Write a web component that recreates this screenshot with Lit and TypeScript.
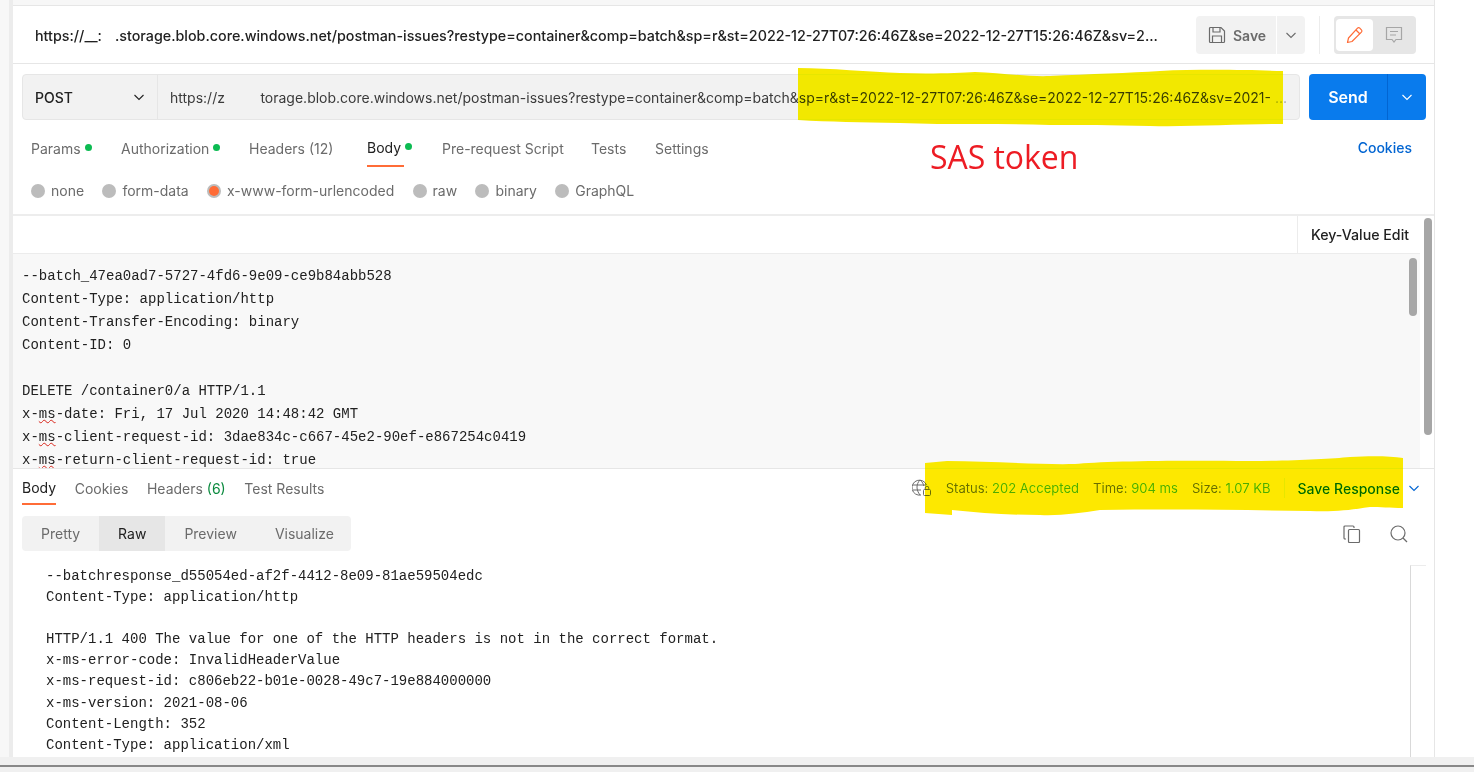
import { LitElement, html, css, svg } from "lit";
import { customElement } from "lit/decorators.js";

const chevron = (cls: string) => html`<svg class=${cls} viewBox="0 0 12 12" width="12" height="12" fill="none" stroke="currentColor" stroke-width="1.1"><path d="M1.5 4 6 8.5 10.5 4"/></svg>`;

const wavy = (rest: string) => html`x-<span class="sp">ms</span>${rest}`;

@customElement("app-root")
export class AppRoot extends LitElement {
  static styles = css`
    :host { display: flex; flex-direction: column; width: 1474px; height: 772px; position: relative; overflow: hidden; background: #fff; font-family: Inter, "Noto Sans", sans-serif; color: #6b6b6b; font-size: 14px; }
    * { box-sizing: border-box; }
    .desk { display: flex; height: 757px; flex: none; }
    .gutter { width: 13px; flex: none; background: #f7f7f7; border-right: 4px solid #ececec; }
    .main { width: 1422px; flex: none; display: flex; flex-direction: column; border-right: 1px solid #e6e6e6; }
    .topstrip { height: 6px; flex: none; background: #f7f7f7; border-bottom: 1px solid #e6e6e6; }
    .head { height: 58px; flex: none; display: flex; align-items: center; padding: 0 0 0 22px; border-bottom: 1px solid #e6e6e6; }
    .title { width: 1161px; flex: none; font-size: 14.3px; font-weight: 500; color: #212121; white-space: nowrap; overflow: hidden; padding-top: 1px; }
    .blot { display: inline-block; }
    .b1 { width: 13px; }
    .b2 { width: 38px; }
    .save { display: flex; align-items: center; gap: 7px; width: 80px; height: 38px; margin-top: 1px; background: #f2f2f2; border-radius: 4px 0 0 4px; padding-left: 12px; font-weight: 600; font-size: 14px; color: #6b6b6b; }
    .savechev { display: flex; align-items: center; justify-content: center; width: 28px; height: 38px; margin: 1px 0 0 1px; background: #f2f2f2; border-radius: 0 4px 4px 0; color: #6b6b6b; }
    .vr { width: 1px; height: 38px; margin: 1px 14px 0 14px; background: #ececec; }
    .toggle { display: flex; align-items: center; width: 82px; height: 38px; margin-top: 1px; background: #e6e6e6; border-radius: 4px; padding: 3px 2px; }
    .toggle .on { width: 37px; height: 32px; background: #fff; border-radius: 4px; display: flex; align-items: center; justify-content: center; }
    .toggle .off { flex: 1; display: flex; align-items: center; justify-content: center; }
    .urlrow { height: 66px; flex: none; display: flex; align-items: flex-start; padding: 10px 8px 0 9px; gap: 9px; }
    .urlbar { width: 1278px; height: 46px; flex: none; display: flex; background: #f2f2f2; border: 1px solid #e6e6e6; border-radius: 4px; }
    .method { width: 135px; flex: none; display: flex; align-items: center; justify-content: space-between; padding: 0 12px; border-right: 1px solid #e6e6e6; font-weight: 500; font-size: 14px; color: #212121; }
    .url { flex: 1; display: flex; align-items: center; padding: 0 12px; font-size: 14px; color: #3b3b3b; white-space: pre; overflow: hidden; }
    .fade { color: #a6a6a6; }
    .send { width: 117px; height: 46px; flex: none; display: flex; background: #097bed; border-radius: 4px; color: #fff; font-weight: 600; font-size: 16px; }
    .send .lbl { width: 79px; display: flex; align-items: center; justify-content: center; border-right: 1px solid #0265d2; }
    .send .dd { flex: 1; display: flex; align-items: center; justify-content: center; }
    .tabs { height: 38px; flex: none; display: flex; padding-left: 18px; }
    .tab { height: 38px; display: flex; align-items: center; gap: 4px; white-space: nowrap; padding-bottom: 2px; }
    .tab.active { color: #212121; height: 37px; padding-bottom: 1px; border-bottom: 2px solid #ff6c37; }
    .dot { flex: none; width: 7px; height: 7px; border-radius: 50%; background: #0cbb52; margin-bottom: 1px; }
    .w90 { width: 90px; }
    .w128 { width: 128px; }
    .w118 { width: 118px; }
    .w37 { width: 37px; }
    .w149 { width: 149px; margin-left: 38px; }
    .w64 { width: 64px; }
    .cookies { margin-left: auto; margin-right: 22px; color: #0265d2; font-weight: 500; font-size: 14px; padding-bottom: 3px; height: 38px; display: flex; align-items: center; }
    .radios { height: 48px; flex: none; display: flex; align-items: center; padding: 0 0 1px 18px; gap: 18.3px; border-bottom: 2px solid #ededed; }
    .radio { display: flex; align-items: center; gap: 6px; white-space: nowrap; }
    .radio i { width: 14px; height: 14px; border-radius: 50%; background: #bcbcbc; display: flex; align-items: center; justify-content: center; }
    .radio i.sel::after { content: ""; width: 10px; height: 10px; border-radius: 50%; background: #ff6c37; }
    .bodyarea { flex: none; height: 252px; display: flex; flex-direction: column; position: relative; }
    .kv { height: 38px; flex: none; display: flex; justify-content: flex-end; border-bottom: 1px solid #ececec; margin-right: 14px; }
    .kv span { width: 123px; border-left: 1px solid #ececec; display: flex; align-items: center; padding-left: 13px; color: #212121; font-weight: 500; font-size: 14.2px; }
    .editor { flex: 1; margin-right: 14px; background: #f8f8f8; padding: 11px 0 0 9px; overflow: hidden; position: relative; }
    .code { font-family: "Liberation Mono", "DejaVu Sans Mono", monospace; font-size: 14px; color: #212121; white-space: pre; }
    .editor .code { line-height: 23px; }
    .sp { text-decoration: underline wavy #d8261c 1px; }
    .sb { position: absolute; width: 8px; border-radius: 4px; background: #a6a6a6; }
    .sb.outer { right: 2px; top: 2px; height: 217px; }
    .sb.inner { right: 3px; top: 4px; height: 58px; }
    .resp { flex: 1; display: flex; flex-direction: column; border-top: 1px solid #e6e6e6; min-height: 0; }
    .rtabs { height: 36px; flex: none; display: flex; align-items: stretch; padding-left: 9px; gap: 18.6px; }
    .rtab { display: flex; align-items: center; height: 36px; padding-top: 2px; white-space: nowrap; }
    .rtab.active { color: #212121; border-bottom: 2px solid #ff6c37; }
    .rtab b { font-weight: 400; color: #0a8a3e; }
    .meta { margin-left: auto; display: flex; align-items: center; font-size: 13.05px; color: #6b6b6b; padding-top: 2px; }
    .globe { margin-right: 14px; }
    .v { color: #50aa40; }
    .m { margin-right: 14px; white-space: nowrap; }
    .sep { width: 1px; height: 20px; background: #e6e6e6; margin: 0 13px 0 -1px; }
    .sr { color: #0265d2; font-weight: 500; font-size: 14px; white-space: nowrap; }
    .ch { color: #0265d2; margin: 0 14px 0 8px; display: flex; }
    .rtools { height: 60px; flex: none; display: flex; align-items: flex-start; padding: 11px 0 0 9px; }
    .seg { display: flex; height: 35px; background: #f2f2f2; border-radius: 4px; overflow: hidden; }
    .seg span { display: flex; align-items: center; padding: 0 19px; }
    .seg span:last-child { padding-right: 17px; }
    .seg span.on { background: #e6e6e6; color: #212121; }
    .icons { margin-left: auto; display: flex; gap: 29px; padding: 9px 26px 0 0; }
    .rbody { flex: 1; min-height: 0; display: flex; padding: 0 0 0 33px; overflow: hidden; }
    .rbody .code { flex: 1; line-height: 21.15px; padding-top: 0.6px; }
    .rgut { width: 16px; margin-right: 8px; flex: none; border-left: 1px solid #d9d9d9; border-top: 1px solid #ececec; }
    .foot { flex: 1; display: flex; flex-direction: column; background: #f0f0f0; }
    .foot i { display: block; height: 2px; margin-top: 8px; background: #888; }
    .ink { position: absolute; left: 0; top: 0; width: 1474px; height: 772px; pointer-events: none; mix-blend-mode: darken; }
    .note { position: absolute; left: 930px; top: 135px; font-family: "Open Sans", "Noto Sans", sans-serif; font-size: 32px; line-height: 44px; color: #ed1c24; letter-spacing: -0.05px; white-space: nowrap; }
  `;

  render() {
    return html`
      <div class="desk">
        <div class="gutter"></div>
        <div class="main">
          <div class="topstrip"></div>
          <div class="head">
            <div class="title">https://__:<span class="blot b1"></span>.storage.blob.core.windows.net/postman-issues?restype=container&amp;comp=batch&amp;sp=r&amp;st=2022-12-27T07:26:46Z&amp;se=2022-12-27T15:26:46Z&amp;sv=2...</div>
            <div class="save">
              <svg width="18" height="18" viewBox="0 0 18 18" fill="none" stroke="#6b6b6b" stroke-width="1.2"><path d="M1.5 2.5a1 1 0 0 1 1-1h10.5l3.5 3.5v10.5a1 1 0 0 1-1 1h-13a1 1 0 0 1-1-1z"/><path d="M5 1.5v4.5h7V1.5"/><path d="M4.5 16.5v-6.5h9v6.5"/></svg>
              Save
            </div>
            <div class="savechev">${chevron("")}</div>
            <div class="vr"></div>
            <div class="toggle">
              <div class="on"><svg width="18" height="18" viewBox="0 0 18 18" fill="none" stroke="#ff6c37" stroke-width="1.2" stroke-linejoin="round"><path d="M1.5 16.5l1-4.5L11.5 2.2a1.6 1.6 0 0 1 2.3 0l1.6 1.6a1.6 1.6 0 0 1 0 2.3L6 15.5z"/><path d="M10 4l4 4"/></svg></div>
              <div class="off"><svg width="18" height="18" viewBox="0 0 18 18" fill="none" stroke="#a6a6a6" stroke-width="1.2"><path d="M1.5 1.5h15v12h-5.5l-2 2.5-2-2.5h-5.5z"/><path d="M5 5.5h8M5 9h6"/></svg></div>
            </div>
          </div>
          <div class="urlrow">
            <div class="urlbar">
              <div class="method">POST ${chevron("")}</div>
              <div class="url">https://z<span class="blot b2"></span>torage.blob.core.windows.net/postman-issues?restype=container&amp;comp=batch&amp;sp=r&amp;st=2022-12-27T07:26:46Z&amp;se=2022-12-27T15:26:46Z&amp;sv=2021- <span class="fade">...</span></div>
            </div>
            <div class="send"><div class="lbl">Send</div><div class="dd">${chevron("")}</div></div>
          </div>
          <div class="tabs">
            <div class="tab w90">Params <span class="dot"></span></div>
            <div class="tab w128">Authorization <span class="dot"></span></div>
            <div class="tab w118">Headers (12)</div>
            <div class="tab active w37">Body <span class="dot"></span></div>
            <div class="tab w149">Pre-request Script</div>
            <div class="tab w64">Tests</div>
            <div class="tab">Settings</div>
            <div class="cookies">Cookies</div>
          </div>
          <div class="radios">
            <div class="radio"><i></i>none</div>
            <div class="radio"><i></i>form-data</div>
            <div class="radio"><i class="sel"></i>x-www-form-urlencoded</div>
            <div class="radio"><i></i>raw</div>
            <div class="radio"><i></i>binary</div>
            <div class="radio"><i></i>GraphQL</div>
          </div>
          <div class="bodyarea">
            <div class="kv"><span>Key-Value Edit</span></div>
            <div class="editor"><div class="code">--batch_47ea0ad7-5727-4fd6-9e09-ce9b84abb528
Content-Type: application/http
Content-Transfer-Encoding: binary
Content-ID: 0

DELETE /container0/a HTTP/1.1
${wavy("-date: Fri, 17 Jul 2020 14:48:42 GMT")}
${wavy("-client-request-id: 3dae834c-c667-45e2-90ef-e867254c0419")}
${wavy("-return-client-request-id: true")}</div>
              <div class="sb inner"></div>
            </div>
            <div class="sb outer"></div>
          </div>
          <div class="resp">
            <div class="rtabs">
              <div class="rtab active">Body</div>
              <div class="rtab">Cookies</div>
              <div class="rtab">Headers&nbsp;<b>(6)</b></div>
              <div class="rtab">Test Results</div>
              <div class="meta">
                <svg class="globe" width="20" height="18" viewBox="0 0 20 18" fill="none" stroke="#6b6b6b" stroke-width="1"><path d="M14.5 6A7.5 7.5 0 1 0 9 16"/><path d="M8 1c-4 4-4 10 0 15M8 1c2.5 2 3.5 4 3.8 6M1 6h13M1 11h8"/><rect x="11.5" y="10.5" width="7" height="6" rx="1"/><path d="M13.2 10.5V9a1.8 1.8 0 0 1 3.6 0v1.5"/></svg>
                <span class="m">Status: <span class="v">202 Accepted</span></span>
                <span class="m">Time: <span class="v">904 ms</span></span>
                <span class="m">Size: <span class="v">1.07 KB</span></span>
                <span class="sep"></span>
                <span class="sr">Save Response</span>
                <span class="ch">${chevron("")}</span>
              </div>
            </div>
            <div class="rtools">
              <div class="seg"><span>Pretty</span><span class="on">Raw</span><span>Preview</span><span>Visualize</span></div>
              <div class="icons">
                <svg width="18" height="18" viewBox="0 0 18 18" fill="none" stroke="#6b6b6b" stroke-width="1.2"><rect x="5.5" y="4.5" width="11" height="13" rx="1"/><path d="M3 14H2a1 1 0 0 1-1-1V2a1 1 0 0 1 1-1h8a1 1 0 0 1 1 1v1"/></svg>
                <svg width="18" height="18" viewBox="0 0 18 18" fill="none" stroke="#6b6b6b" stroke-width="1.2"><circle cx="8" cy="8" r="7"/><path d="M13 13l4 4"/></svg>
              </div>
            </div>
            <div class="rbody">
              <div class="code">--batchresponse_d55054ed-af2f-4412-8e09-81ae59504edc
Content-Type: application/http

HTTP/1.1 400 The value for one of the HTTP headers is not in the correct format.
x-ms-error-code: InvalidHeaderValue
x-ms-request-id: c806eb22-b01e-0028-49c7-19e884000000
x-ms-version: 2021-08-06
Content-Length: 352
Content-Type: application/xml</div>
              <div class="rgut"></div>
            </div>
          </div>
        </div>
      </div>
      <div class="foot"><i></i></div>
      <svg class="ink" viewBox="0 0 1474 772">
        ${svg`<path fill="#f5e800" d="M798 68C830 68 870 72 900 73C930 74 960 73 975 72C1000 73 1030 77 1050 76C1090 74 1130 73 1160 71C1200 69 1250 70 1283 71L1283 124C1240 124 1190 127 1150 126C1110 125 1080 125 1050 125C1000 123 950 125 900 123C860 122 830 122 798 120Z"/>`}
        ${svg`<path fill="#fde800" d="M925 463L947 461C990 461 1040 465 1075 464C1100 461 1180 460 1250 461C1290 461 1330 459 1350 457C1370 456 1390 456 1403 458L1403 508C1390 508 1380 507 1370 507C1350 510 1335 512 1310 511C1250 510 1180 509 1100 510C1080 513 1060 516 1040 515C1010 515 980 513 952 510L952 515L925 513Z"/>`}
      </svg>
      <div class="note">SAS token</div>
    `;
  }
}
